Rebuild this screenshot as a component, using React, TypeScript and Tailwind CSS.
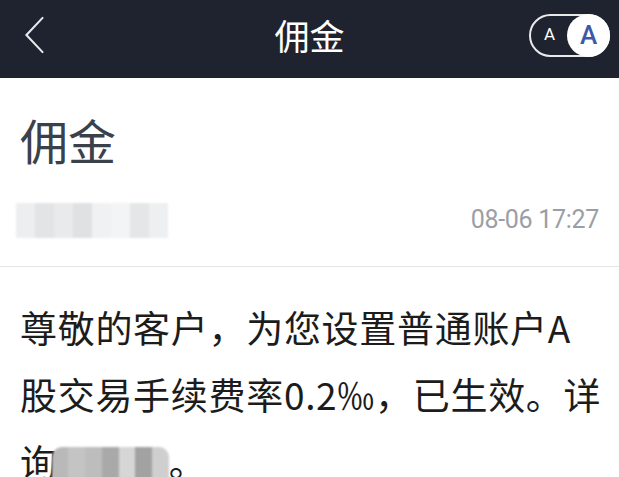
import React from "react";

const cjk = { fontFamily: '"Noto Sans CJK SC", "Noto Sans", sans-serif' };
const num = { fontFamily: 'Roboto, "Noto Sans CJK SC", sans-serif' };

// mosaic tiles standing in for masked sender / link text
const senderTiles = ["#eceef0", "#e2e4e6", "#e9eaec", "#dfe1e3", "#f0f1f2", "#f3f4f5", "#e4e6e8", "#eeeff0"];
const linkTiles = ["#b9b9b9", "#c4c4c4", "#bdbdbd", "#a9a9a9", "#d6d6d6", "#a2a2a2", "#cfcfcf"];

function FontToggle() {
  return (
    <div className="flex h-[43px] w-[81px] items-center rounded-full border-2 border-white/90 pl-[13px]">
      <span className="text-[17px] text-white" style={num}>
        A
      </span>
      <span className="ml-auto -mr-[2px] flex h-[43px] w-[43px] items-center justify-center rounded-full bg-white text-[26px] font-medium text-[#3b5aa6]" style={num}>
        A
      </span>
    </div>
  );
}

export default function App() {
  return (
    <div className="h-[477px] w-[619px] overflow-hidden bg-white" style={cjk}>
      <header className="grid h-[78px] grid-cols-[1fr_auto_1fr] items-center bg-[#1f2330] px-[22px] pb-[8px]">
        <svg viewBox="0 0 24 40" className="h-[38px] w-[24px]" fill="none" stroke="#e8e9ec" strokeWidth="2.2" strokeLinecap="round">
          <path d="M21 2 4 20l17 18" />
        </svg>
        <h1 className="text-[35px] leading-[44px] text-white">佣金</h1>
        <div className="-mr-[13px] flex justify-end">
          <FontToggle />
        </div>
      </header>

      <div className="border-b border-[#e6e6e6] px-[20px] pb-[28px] pt-[31px]">
        <h2 className="text-[48px] leading-[60px] text-[#3b414b]">佣金</h2>
        <div className="mt-[33px] flex h-[36px] items-center justify-between">
          <div className="flex h-[35px] -ml-[4px] blur-[1px]">
            {senderTiles.map((c, i) => (
              <div key={i} className="h-full w-[19px]" style={{ background: c }} />
            ))}
          </div>
          <span className="text-[25px] tracking-[-0.3px] text-[#9a9ea6]" style={num}>
            08-06 17:27
          </span>
        </div>
      </div>

      <p className="whitespace-nowrap px-[20px] pt-[27px] text-[37px] leading-[67px] tracking-[0.7px] text-[#1c1c1c]">
        尊敬的客户，为您设置普通账户A
        <br />
        股交易手续费率0.2‰，已生效。详
        <br />
        询
        <span className="-ml-[6px] inline-flex h-[34px] w-[117px] translate-y-[4px] overflow-hidden rounded-t-[10px] align-baseline blur-[1px]">
          {linkTiles.map((c, i) => (
            <span key={i} className="h-full flex-1" style={{ background: c }} />
          ))}
        </span>
        。
      </p>
    </div>
  );
}
